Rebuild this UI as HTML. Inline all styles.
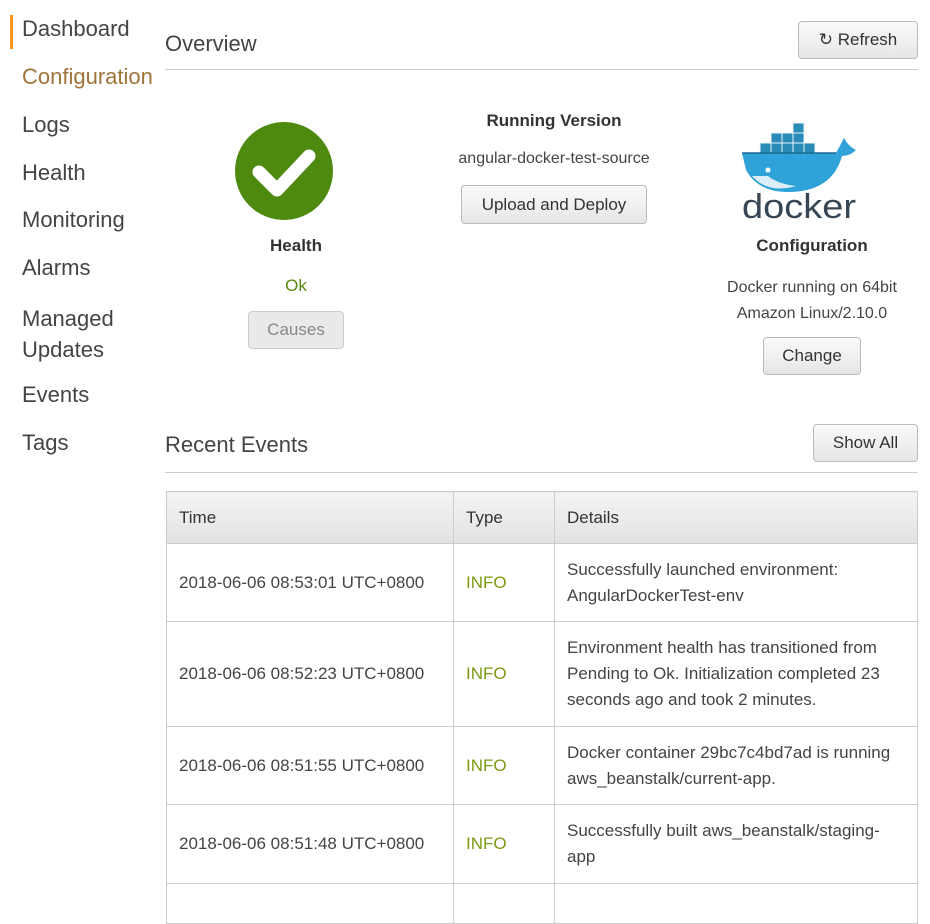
<!DOCTYPE html>
<html><head><style>
body{margin:0;width:930px;height:891px;background:#fff;font-family:"Liberation Sans",sans-serif;color:#444;position:relative;overflow:hidden}
.a{position:absolute}
.nav{left:22px;font-size:22px;color:#444}
.btn{position:absolute;background:linear-gradient(#fafafa,#e6e6e6);border:1px solid #bbb;border-radius:4px;font-size:17px;color:#333;text-align:center;box-sizing:border-box}
.c{text-align:center;position:absolute}
table{position:absolute;left:166px;top:491px;width:752px;border-collapse:collapse;font-size:17px}
td,th{border:1px solid #ccc;padding:0 12px;text-align:left;vertical-align:middle;line-height:26px}
th{background:linear-gradient(#f4f4f4,#e2e2e2);font-weight:normal;color:#333;height:51px}
.i{color:#7a9a10}
</style></head><body>
<div class="a" style="left:10px;top:15px;width:3px;height:34px;background:#f7981d"></div>
<div class="a nav" style="top:16px">Dashboard</div>
<div class="a nav" style="top:64px;color:#a0743a">Configuration</div>
<div class="a nav" style="top:112px">Logs</div>
<div class="a nav" style="top:160px">Health</div>
<div class="a nav" style="top:207px">Monitoring</div>
<div class="a nav" style="top:255px">Alarms</div>
<div class="a nav" style="top:303px;line-height:31px">Managed<br>Updates</div>
<div class="a nav" style="top:382px">Events</div>
<div class="a nav" style="top:430px">Tags</div>

<div class="a" style="left:165px;top:31px;font-size:22px;color:#444">Overview</div>
<div class="a" style="left:165px;top:69px;width:753px;height:1px;background:#ccc"></div>
<div class="btn" style="left:798px;top:21px;width:120px;height:38px;line-height:36px">&#x21bb; Refresh</div>

<svg class="a" style="left:235px;top:122px" width="98" height="98"><circle cx="49" cy="49" r="49" fill="#4f8a10"/><path d="M24 50 L42 68 L74 34" stroke="#fff" stroke-width="13" fill="none" stroke-linecap="round" stroke-linejoin="round"/></svg>
<div class="c" style="left:226px;width:140px;top:236px;font-size:17px;font-weight:bold;color:#333">Health</div>
<div class="c" style="left:226px;width:140px;top:276px;font-size:17px;color:#5a8a10">Ok</div>
<div class="btn" style="left:248px;top:311px;width:96px;height:38px;line-height:36px;color:#888;background:#e9e9e9;border-color:#ccc">Causes</div>

<div class="c" style="left:440px;width:228px;top:111px;font-size:17px;font-weight:bold;color:#333">Running Version</div>
<div class="c" style="left:430px;width:248px;top:150px;font-size:16px">angular-docker-test-source</div>
<div class="btn" style="left:461px;top:185px;width:186px;height:39px;line-height:37px">Upload and Deploy</div>

<svg class="a" style="left:738px;top:120px" width="122" height="104">
<g fill="#2a8ab8" stroke="#e8f4fa" stroke-width="1">
<rect x="55" y="3" width="11" height="10"/>
<rect x="33" y="13" width="11" height="10"/><rect x="44" y="13" width="11" height="10"/><rect x="55" y="13" width="11" height="10"/>
<rect x="22" y="23" width="11" height="10"/><rect x="33" y="23" width="11" height="10"/><rect x="44" y="23" width="11" height="10"/><rect x="55" y="23" width="11" height="10"/><rect x="66" y="23" width="11" height="10"/>
</g>
<path d="M4 33 H98 Q102 26 106 18 Q110 26 118 30 Q112 36 104 36 Q94 72 50 72 Q20 72 8 50 Z" fill="#2fa2d9"/>
<path d="M4 33 H98" stroke="#1a6a90" stroke-width="1.5"/>
<path d="M14 56 Q30 74 58 66 Q40 64 30 56 Z" fill="#dbeef8"/>
<circle cx="30" cy="50" r="2.5" fill="#fff"/>
<text x="4" y="98" textLength="114" lengthAdjust="spacingAndGlyphs" font-family="Liberation Sans,sans-serif" font-size="34" fill="#364654">docker</text>
</svg>
<div class="c" style="left:732px;width:160px;top:236px;font-size:17px;font-weight:bold;color:#333">Configuration</div>
<div class="c" style="left:700px;width:224px;top:275px;font-size:16px;line-height:26px">Docker running on 64bit<br>Amazon Linux/2.10.0</div>
<div class="btn" style="left:763px;top:337px;width:98px;height:38px;line-height:36px">Change</div>

<div class="a" style="left:165px;top:432px;font-size:22px">Recent Events</div>
<div class="a" style="left:165px;top:472px;width:753px;height:1px;background:#ccc"></div>
<div class="btn" style="left:813px;top:424px;width:105px;height:38px;line-height:36px">Show All</div>

<table>
<tr><th style="width:262px">Time</th><th style="width:76px">Type</th><th>Details</th></tr>
<tr style="height:78px"><td>2018-06-06 08:53:01 UTC+0800</td><td class="i">INFO</td><td>Successfully launched environment:<br>AngularDockerTest-env</td></tr>
<tr style="height:105px"><td>2018-06-06 08:52:23 UTC+0800</td><td class="i">INFO</td><td>Environment health has transitioned from Pending to Ok. Initialization completed 23 seconds ago and took 2 minutes.</td></tr>
<tr style="height:78px"><td>2018-06-06 08:51:55 UTC+0800</td><td class="i">INFO</td><td>Docker container 29bc7c4bd7ad is running aws_beanstalk/current-app.</td></tr>
<tr style="height:79px"><td>2018-06-06 08:51:48 UTC+0800</td><td class="i">INFO</td><td>Successfully built aws_beanstalk/staging-<br>app</td></tr>
<tr style="height:40px"><td></td><td></td><td></td></tr>
</table>
</body></html>
